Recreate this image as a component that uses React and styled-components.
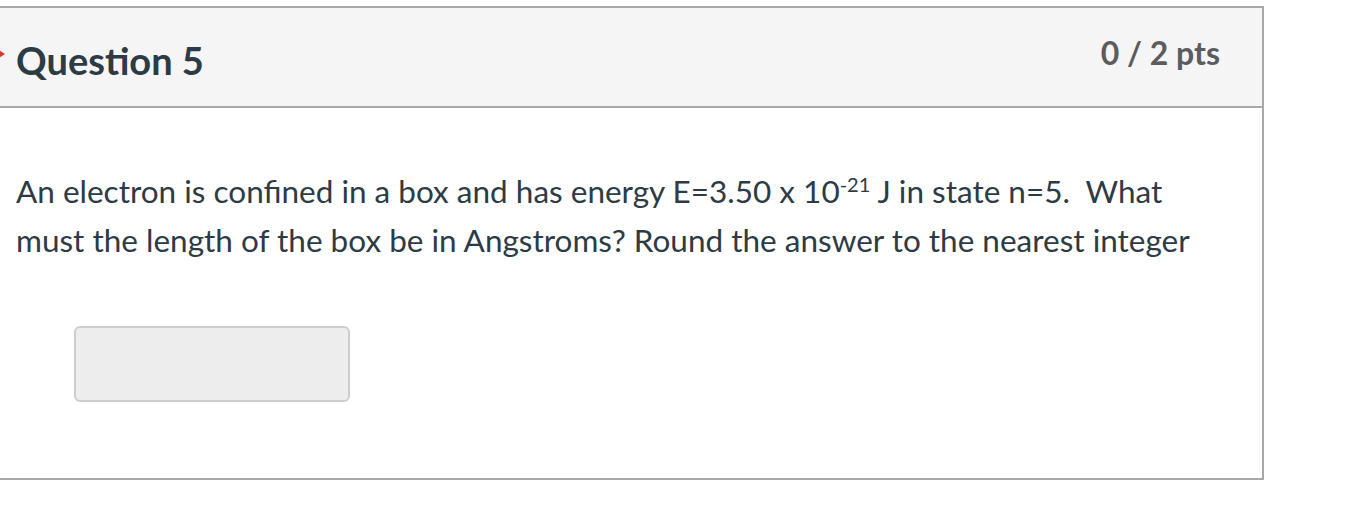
import React from 'react'
import styled, { createGlobalStyle } from 'styled-components'

const GlobalStyle = createGlobalStyle`
  html, body {
    margin: 0;
    padding: 0;
    background: #ffffff;
    font-family: Lato, "Open Sans", sans-serif;
    color: #2d3b45;
  }
`

const Style = {
  Page: styled.div`
    padding-top: 6px;
    width: 1348px;
    height: 506px;
    box-sizing: border-box;
    overflow: hidden;
  `,

  Panel: styled.div`
    position: relative;
    width: 1264px;
    box-sizing: border-box;
    border: 2px solid #a8a8a8;
    border-left: none;
  `,

  Marker: styled.svg`
    position: absolute;
    left: -7px;
    top: 38px;
  `,

  Header: styled.div`
    height: 100px;
    box-sizing: border-box;
    background: #f5f5f5;
    border-bottom: 2px solid #a8a8a8;
    display: flex;
    justify-content: space-between;
    padding: 0 42px 0 16px;
  `,

  Title: styled.h2`
    margin: 0;
    padding-top: 30px;
    font-size: 38px;
    line-height: 44px;
    font-weight: 700;
    color: #2d3b45;
  `,

  Points: styled.div`
    padding-top: 25px;
    font-size: 32px;
    line-height: 40px;
    font-weight: 700;
    color: #5c5c5c;
  `,

  Body: styled.div`
    height: 370px;
    box-sizing: border-box;
    padding: 59px 50px 0 16px;
  `,

  Text: styled.p`
    margin: 0;
    font-size: 31.5px;
    line-height: 49px;
    color: #2d3b45;

    sup {
      font-size: 20px;
      line-height: 0;
    }
  `,

  Answer: styled.div`
    margin-top: 61px;
    margin-left: 58px;
    width: 276px;
    height: 76px;
    box-sizing: border-box;
    background: #ededed;
    border: 2px solid #cdcdcd;
    border-radius: 6px;
  `,
}

export default function App() {
  return (
    <>
      <GlobalStyle />
      <Style.Page>
        <Style.Panel>
          <Style.Marker width="12" height="16" viewBox="0 0 12 16">
            <path d="M0 0 L12 8 L0 16 Z" fill="#d23a2f" />
          </Style.Marker>
          <Style.Header>
            <Style.Title>Question 5</Style.Title>
            <Style.Points>0 / 2 pts</Style.Points>
          </Style.Header>
          <Style.Body>
            <Style.Text>
              An electron is confined in a box and has energy E=3.50 x 10<sup>-21</sup> J in state n=5.&nbsp; What must the length of the box be in Angstroms? Round the answer to the nearest integer
            </Style.Text>
            <Style.Answer />
          </Style.Body>
        </Style.Panel>
      </Style.Page>
    </>
  )
}
